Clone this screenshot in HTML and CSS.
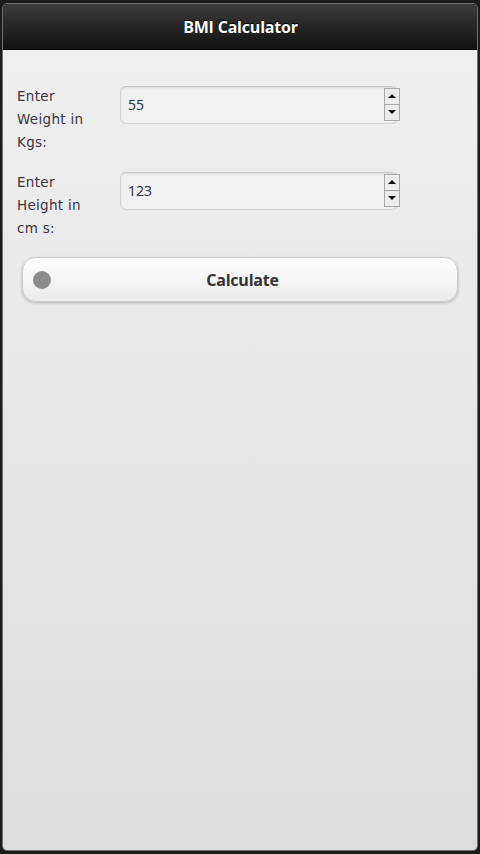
FILE: index.html
```html
<!DOCTYPE html>
<html>
<head>
<meta charset="utf-8">
<title>BMI Calculator</title>
<link rel="stylesheet" href="styles.css">
</head>
<body>
<div class="app">
  <header class="bar"><h1 class="title">BMI Calculator</h1></header>
  <main class="content">
    <div class="row">
      <label class="lbl">Enter<br>Weight in<br>Kgs:</label>
      <div class="field">
        <input class="num" type="text" value="55">
        <div class="spin"><span class="sb up"></span><span class="sb down"></span></div>
      </div>
    </div>
    <div class="row">
      <label class="lbl">Enter<br>Height in<br>cm s:</label>
      <div class="field">
        <input class="num" type="text" value="123">
        <div class="spin"><span class="sb up"></span><span class="sb down"></span></div>
      </div>
    </div>
    <button class="btn"><span class="dot"></span><span class="btn-text">Calculate</span></button>
  </main>
</div>
</body>
</html>
```
FILE: styles.css
```css
html, body { margin: 0; padding: 0; }
body {
  background: #1b1b1b;
  width: 480px;
  height: 854px;
  font-family: "DejaVu Sans", "Liberation Sans", sans-serif;
}
.app {
  box-sizing: border-box;
  margin: 3px 2px 0 2px;
  height: 848px;
  border: 1px solid #6e6e6e;
  border-radius: 5px;
  overflow: hidden;
  display: flex;
  flex-direction: column;
}
.bar {
  height: 45px;
  flex: none;
  background: linear-gradient(#3d3d3d, #262626 50%, #121212);
  border-bottom: 1px solid #000;
  display: flex;
  align-items: center;
  justify-content: center;
}
.title {
  margin: 0;
  color: #fff;
  font-family: "Open Sans", "DejaVu Sans", sans-serif;
  font-weight: bold;
  font-size: 16px;
  letter-spacing: -0.2px;
  text-shadow: 0 -1px 1px #000;
  padding-left: 1px;
}
.content {
  flex: 1;
  background: linear-gradient(#efefef, #dddddd);
  padding: 35px 0 0 14px;
}
.row {
  display: grid;
  grid-template-columns: 103px 280px;
  margin-bottom: 17px;
}
.lbl {
  font-size: 13.5px;
  line-height: 23px;
  color: #3b3340;
  letter-spacing: 0.3px;
}
.field {
  position: relative;
  height: 38px;
  margin-top: 1px;
}
.num {
  box-sizing: border-box;
  width: 278px;
  height: 38px;
  margin: 0;
  border: 1px solid #d2d2d2;
  border-top-color: #c8c8c8;
  border-radius: 6px;
  background: #f0f0f0;
  box-shadow: inset 0 1px 2px rgba(0,0,0,0.08);
  padding: 0 0 2px 7px;
  font-family: "Open Sans", "DejaVu Sans", sans-serif;
  font-size: 14px;
  color: #2a2a3a;
  outline: none;
}
.spin {
  position: absolute;
  left: 264px;
  top: 2px;
  width: 16px;
  height: 33px;
  display: flex;
  flex-direction: column;
}
.sb {
  box-sizing: border-box;
  flex: 1;
  border: 1px solid #a8a8a8;
  background: #ececec;
  position: relative;
}
.sb.down { border-top: none; }
.sb::after {
  content: "";
  position: absolute;
  left: 3px;
  width: 0;
  height: 0;
  border-left: 4px solid transparent;
  border-right: 4px solid transparent;
}
.sb.up::after { top: 5px; border-bottom: 4px solid #111; }
.sb.down::after { top: 5px; border-top: 4px solid #111; }
.btn {
  box-sizing: border-box;
  display: flex;
  align-items: center;
  position: relative;
  margin: 1px 0 0 5px;
  width: 436px;
  height: 45px;
  border: 1px solid #cccccc;
  border-radius: 14px;
  background: linear-gradient(#ffffff, #eaeaea);
  box-shadow: 0 1px 3px rgba(0,0,0,0.25);
  padding: 0;
  font-family: "Open Sans", "DejaVu Sans", sans-serif;
  cursor: pointer;
}
.dot {
  position: absolute;
  left: 10px;
  top: 13px;
  width: 18px;
  height: 18px;
  border-radius: 50%;
  background: #8c8c8c;
}
.btn-text {
  flex: 1;
  text-align: center;
  font-weight: bold;
  font-size: 16px;
  color: #333;
  letter-spacing: -0.2px;
  padding-left: 5px;
}
```
